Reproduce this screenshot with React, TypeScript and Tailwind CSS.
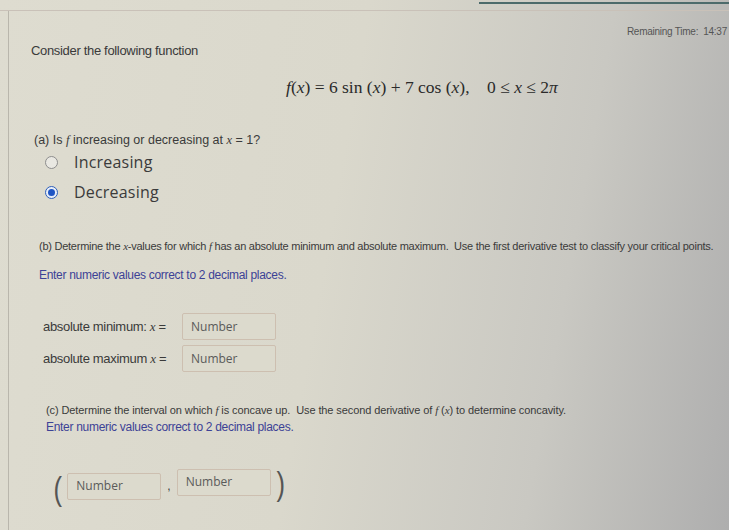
import React from "react";

const sans = { fontFamily: '"Liberation Sans", Arial, sans-serif' };

const Radio = ({ label, checked }: { label: string; checked?: boolean }) => (
  <label className="flex items-center gap-[16px] h-[30px] pl-[36px]">
    <span
      className={
        checked
          ? "w-[13px] h-[13px] rounded-full border-[1.5px] border-[#2f5fb8] bg-[#e8eef8] flex items-center justify-center"
          : "w-[13px] h-[13px] rounded-full border-[1.5px] border-[#8d8d8d] bg-[#e9e8e2]"
      }
    >
      {checked && <span className="w-[7px] h-[7px] rounded-full bg-[#1f55c4]" />}
    </span>
    <span className="text-[16px] text-[#3b3b3b] tracking-[0.2px]" style={{ fontFamily: '"Open Sans", sans-serif' }}>
      {label}
    </span>
  </label>
);

const NumberBox = ({ className = "" }: { className?: string }) => (
  <div
    className={
      "w-[94px] h-[27px] border border-[#cdbfb0] rounded-[2px] bg-[#dcdacd] flex items-center pl-[8px] text-[12px] text-[#5a5a5a] " +
      className
    }
    style={{ fontFamily: '"Open Sans", sans-serif' }}
  >
    Number
  </div>
);

const X = () => <i style={{ fontFamily: '"Liberation Serif", serif' }}>x</i>;
const F = () => <i style={{ fontFamily: '"Liberation Serif", serif' }}>f</i>;

export default function App() {
  return (
    <div
      className="relative w-[729px] h-[530px] overflow-hidden text-[#3a3a3a] bg-[linear-gradient(100deg,#dedcd0_0%,#dad8cc_45%,#c9c8c2_75%,#aeaeae_100%)]"
      style={sans}
    >
      <div className="absolute right-0 top-[2px] w-[250px] h-[2px] bg-[#4c6b6b]" />
      <div className="h-[11px] border-b border-[#c9c1b8]" />
      <div className="ml-[8px] border-l border-[#b9b6ac] h-[519px]">
        <div className="flex justify-end pr-[2px] pt-[15px] text-[10px] leading-[12px] text-[#555] tracking-tight">
          <span>Remaining Time:&nbsp;&nbsp;14:37</span>
        </div>
        <p className="ml-[22px] mt-[5px] text-[13px] leading-[16px] tracking-tight">Consider the following function</p>

        <div
          className="mt-[17px] ml-[277px] text-[17.5px] leading-[22px] text-[#2a2a2a] whitespace-nowrap"
          style={{ fontFamily: '"Liberation Serif", serif' }}
        >
          <i>f</i>(<i>x</i>) = 6 sin (<i>x</i>) + 7 cos (<i>x</i>),&nbsp;&nbsp;&nbsp; 0 ≤ <i>x</i> ≤ 2<i>π</i>
        </div>

        <p className="ml-[25px] mt-[35px] text-[12.5px] leading-[14px]">
          (a) Is <F /> increasing or decreasing at <X /> = 1?
        </p>
        <div className="mt-[0px]">
          <Radio label="Increasing" />
          <Radio label="Decreasing" checked />
        </div>

        <p className="ml-[30px] mt-[32px] text-[11px] leading-[14px] tracking-[-0.25px] whitespace-nowrap">
          (b) Determine the <X />-values for which <F /> has an absolute minimum and absolute maximum.&nbsp; Use the first derivative test to classify your critical points.
        </p>
        <p className="ml-[30px] mt-[15px] text-[12px] leading-[14px] text-[#3c4296] tracking-tight">
          Enter numeric values correct to 2 decimal places.
        </p>

        <div className="ml-[34px] mt-[31px] flex flex-col gap-[5px]">
          <div className="flex items-center">
            <span className="w-[139px] text-[13px] tracking-tight">
              absolute minimum: <X /> =
            </span>
            <NumberBox />
          </div>
          <div className="flex items-center">
            <span className="w-[139px] text-[13px] tracking-tight">
              absolute maximum <X /> =
            </span>
            <NumberBox />
          </div>
        </div>

        <p className="ml-[37px] mt-[31px] text-[11px] leading-[14px] tracking-[-0.1px] whitespace-nowrap">
          (c) Determine the interval on which <F /> is concave up.&nbsp; Use the second derivative of <F /> (<X />) to determine concavity.
        </p>
        <p className="ml-[37px] mt-[3px] text-[12px] leading-[14px] text-[#3c4296] tracking-tight">
          Enter numeric values correct to 2 decimal places.
        </p>

        <div className="ml-[43px] mt-[32px] flex items-center gap-[4px]">
          <span className="text-[34px] font-light leading-none text-[#555] mt-[4px] scale-x-75">(</span>
          <NumberBox />
          <span className="text-[12px] mx-[2px]">,</span>
          <NumberBox className="mb-[8px]" />
          <span className="text-[34px] font-light leading-none text-[#555] mb-[6px] scale-x-75">)</span>
        </div>
      </div>
    </div>
  );
}
